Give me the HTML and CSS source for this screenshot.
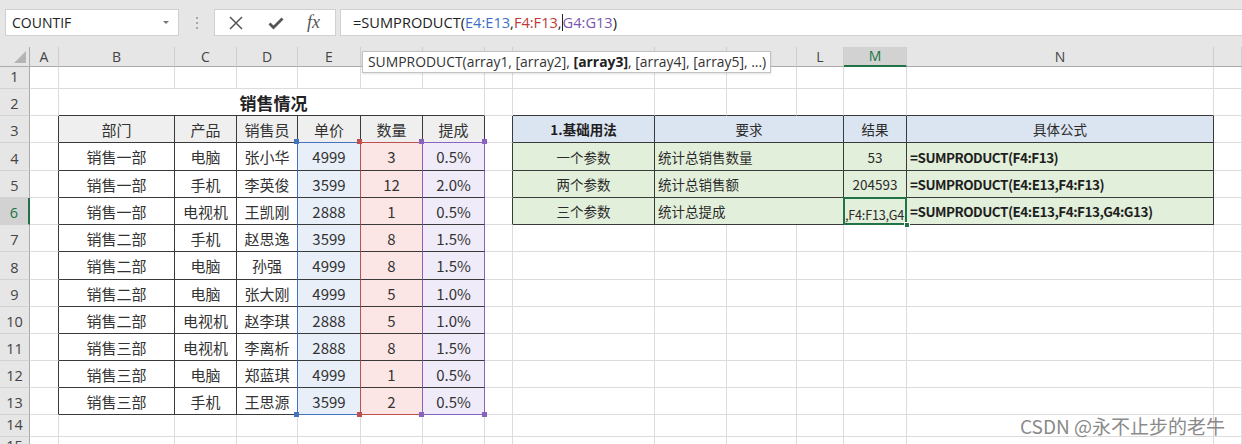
FILE: index.html
```html
<!DOCTYPE html>
<html lang="zh">
<head>
<meta charset="utf-8">
<title>SUMPRODUCT</title>
<link rel="stylesheet" href="styles.css">
</head>
<body>
<div class="app">
  <div class="fbar">
    <div class="namebox"><span>COUNTIF</span><span class="caret"></span></div>
    <div class="sep"><span></span><span></span><span></span></div>
    <div class="btns">
      <svg class="ico" width="16" height="16" viewBox="0 0 16 16"><path d="M2 2 L14 14 M14 2 L2 14" stroke="#555" stroke-width="1.5" fill="none"/></svg>
      <svg class="ico" width="18" height="16" viewBox="0 0 18 16"><path d="M2.5 8.5 L6.5 12.5 L15.5 3.5" stroke="#555" stroke-width="2.8" fill="none"/></svg>
      <span class="fx">fx</span>
    </div>
    <div class="finput">=SUMPRODUCT(<span class="cb">E4:E13</span>,<span class="cr">F4:F13</span>,<span class="cursor"></span><span class="cp">G4:G13</span>)</div>
  </div>

  <table class="grid">
    <colgroup>
      <col class="w30"><col class="w29"><col class="w116"><col class="w62"><col class="w61"><col class="w63"><col class="w62"><col class="w62"><col class="w28"><col class="w142"><col class="w72"><col class="w70"><col class="w47"><col class="w63"><col class="w307"><col class="w28">
    </colgroup>
    <tr class="hdr">
      <th class="corner"><span class="tri"></span></th><th>A</th><th>B</th><th>C</th><th>D</th><th>E</th><th></th><th></th><th></th><th></th><th></th><th></th><th>L</th><th class="selc">M</th><th>N</th><th></th>
    </tr>
    <tr class="h21">
      <th class="rh">1</th><td></td><td></td><td></td><td></td><td></td><td></td><td></td><td></td><td></td><td></td><td></td><td></td><td></td><td></td><td></td>
    </tr>
    <tr class="h27">
      <th class="rh">2</th><td></td><td colspan="6" class="title db">销售情况</td><td></td><td class="db"></td><td class="db"></td><td class="db"></td><td class="db"></td><td class="db"></td><td class="db"></td><td></td>
    </tr>
    <tr class="h27">
      <th class="rh">3</th><td class="dr"></td>
      <td class="lt hd dr db">部门</td><td class="lt hd dr db">产品</td><td class="lt hd dr db">销售员</td><td class="lt hd dr bbB">单价</td><td class="lt hd dr bbR">数量</td><td class="lt hd dr bbP">提成</td>
      <td class="dr"></td>
      <td class="rt rh1 dr db bold">1.基础用法</td><td colspan="3" class="rt rh1 dr db">要求</td><td class="rt rh1 dr db">结果</td><td class="rt rh1 dr db">具体公式</td><td></td>
    </tr>
    <tr class="h28">
      <th class="rh">4</th><td class="dr"></td>
      <td class="lt dr db">销售一部</td><td class="lt dr db">电脑</td><td class="lt rbB db">张小华</td><td class="lt ce rbR db"><i class="sq sqB tl"></i>4999</td><td class="lt cf rbP db"><i class="sq sqR tl"></i>3</td><td class="lt cg rbP db"><i class="sq sqP tl"></i><i class="sq sqP tr"></i>0.5%</td>
      <td class="dr"></td>
      <td class="rt rb dr db">一个参数</td><td colspan="3" class="rt rb dr db left">统计总销售数量</td><td class="rt rb dr db">53</td><td class="rt rb dr db left bold">=SUMPRODUCT(F4:F13)</td><td></td>
    </tr>
    <tr class="h27">
      <th class="rh">5</th><td class="dr"></td>
      <td class="lt dr db">销售一部</td><td class="lt dr db">手机</td><td class="lt rbB db">李英俊</td><td class="lt ce rbR db">3599</td><td class="lt cf rbP db">12</td><td class="lt cg rbP db">2.0%</td>
      <td class="dr"></td>
      <td class="rt rb dr db">两个参数</td><td colspan="3" class="rt rb dr db left">统计总销售额</td><td class="rt rb dr db">204593</td><td class="rt rb dr db left bold">=SUMPRODUCT(E4:E13,F4:F13)</td><td></td>
    </tr>
    <tr class="h27">
      <th class="rh selr">6</th><td class="dr"></td>
      <td class="lt dr db">销售一部</td><td class="lt dr db">电视机</td><td class="lt rbB db">王凯刚</td><td class="lt ce rbR db">2888</td><td class="lt cf rbP db">1</td><td class="lt cg rbP db">0.5%</td>
      <td class="dr"></td>
      <td class="rt rb dr db">三个参数</td><td colspan="3" class="rt rb dr db left">统计总提成</td><td class="rt rb dr db edit"><div class="edtxt">,F4:F13,G4</div><span class="selbox"></span><i class="handle"></i></td><td class="rt rb dr db left bold">=SUMPRODUCT(E4:E13,F4:F13,G4:G13)</td><td></td>
    </tr>
    <tr class="h27">
      <th class="rh">7</th><td class="dr"></td>
      <td class="lt dr db">销售二部</td><td class="lt dr db">手机</td><td class="lt rbB db">赵思逸</td><td class="lt ce rbR db">3599</td><td class="lt cf rbP db">8</td><td class="lt cg rbP db">1.5%</td>
      <td></td><td></td><td></td><td></td><td></td><td></td><td></td><td></td>
    </tr>
    <tr class="h28">
      <th class="rh">8</th><td class="dr"></td>
      <td class="lt dr db">销售二部</td><td class="lt dr db">电脑</td><td class="lt rbB db">孙强</td><td class="lt ce rbR db">4999</td><td class="lt cf rbP db">8</td><td class="lt cg rbP db">1.5%</td>
      <td></td><td></td><td></td><td></td><td></td><td></td><td></td><td></td>
    </tr>
    <tr class="h27">
      <th class="rh">9</th><td class="dr"></td>
      <td class="lt dr db">销售二部</td><td class="lt dr db">电脑</td><td class="lt rbB db">张大刚</td><td class="lt ce rbR db">4999</td><td class="lt cf rbP db">5</td><td class="lt cg rbP db">1.0%</td>
      <td></td><td></td><td></td><td></td><td></td><td></td><td></td><td></td>
    </tr>
    <tr class="h27">
      <th class="rh">10</th><td class="dr"></td>
      <td class="lt dr db">销售二部</td><td class="lt dr db">电视机</td><td class="lt rbB db">赵李琪</td><td class="lt ce rbR db">2888</td><td class="lt cf rbP db">5</td><td class="lt cg rbP db">1.0%</td>
      <td></td><td></td><td></td><td></td><td></td><td></td><td></td><td></td>
    </tr>
    <tr class="h27">
      <th class="rh">11</th><td class="dr"></td>
      <td class="lt dr db">销售三部</td><td class="lt dr db">电视机</td><td class="lt rbB db">李离析</td><td class="lt ce rbR db">2888</td><td class="lt cf rbP db">8</td><td class="lt cg rbP db">1.5%</td>
      <td></td><td></td><td></td><td></td><td></td><td></td><td></td><td></td>
    </tr>
    <tr class="h27">
      <th class="rh">12</th><td class="dr"></td>
      <td class="lt dr db">销售三部</td><td class="lt dr db">电脑</td><td class="lt rbB db">郑蓝琪</td><td class="lt ce rbR db">4999</td><td class="lt cf rbP db">1</td><td class="lt cg rbP db">0.5%</td>
      <td></td><td></td><td></td><td></td><td></td><td></td><td></td><td></td>
    </tr>
    <tr class="h27">
      <th class="rh">13</th><td class="dr"></td>
      <td class="lt dr db">销售三部</td><td class="lt dr db">手机</td><td class="lt rbB db">王思源</td><td class="lt ce rbR bbB"><i class="sq sqB bl"></i>3599</td><td class="lt cf rbP bbR"><i class="sq sqR bl"></i>2</td><td class="lt cg rbP bbP"><i class="sq sqP bl"></i><i class="sq sqP br"></i>0.5%</td>
      <td></td><td></td><td></td><td></td><td></td><td></td><td></td><td></td>
    </tr>
    <tr class="h20">
      <th class="rh">14</th><td></td><td></td><td></td><td></td><td></td><td></td><td></td><td></td><td></td><td></td><td></td><td></td><td></td><td></td><td></td>
    </tr>
    <tr class="h20">
      <th class="rh rh15">15</th><td></td><td></td><td></td><td></td><td></td><td></td><td></td><td></td><td></td><td></td><td></td><td></td><td></td><td></td><td></td>
    </tr>
  </table>

  <div class="tip">SUMPRODUCT(array1, [array2], <b>[array3]</b>, [array4], [array5], ...)</div>
  <div class="wm">CSDN @永不止步的老牛</div>
</div>
</body>
</html>
```

FILE: styles.css
```css
* { box-sizing: border-box; }
body {
  margin: 0;
  background: #fff;
  font-family: "Noto Sans CJK SC", "Noto Sans", sans-serif;
  color: #2b2b2b;
}
.app {
  position: relative;
  width: 1242px;
  height: 444px;
  overflow: hidden;
  background: #fff;
}

/* formula bar */
.fbar {
  height: 47px;
  background: #e6e6e6;
  display: flex;
  align-items: flex-start;
  padding-top: 9px;
}
.namebox {
  margin-left: 5px;
  width: 174px;
  height: 27px;
  background: #fff;
  border: 1px solid #d0d0d0;
  display: flex;
  align-items: center;
  justify-content: space-between;
  padding: 0 9px 0 6px;
  font-family: "Open Sans", "Noto Sans", sans-serif;
  font-size: 14px;
  color: #222;
}
.caret {
  width: 0; height: 0;
  border-left: 3px solid transparent;
  border-right: 3px solid transparent;
  border-top: 3px solid #777;
}
.sep {
  width: 35px;
  height: 27px;
  display: flex;
  flex-direction: column;
  align-items: center;
  justify-content: center;
  gap: 3px;
}
.sep span {
  width: 2px; height: 2px;
  background: #a8a8a8;
}
.btns {
  width: 122px;
  height: 27px;
  background: #fff;
  border: 1px solid #d0d0d0;
  display: flex;
  align-items: center;
  padding-left: 13px;
}
.btns .ico { display: block; }
.btns .ico:first-child { margin-right: 23px; }
.btns .ico:nth-child(2) { margin-right: 22px; }
.fx {
  font-family: "Liberation Serif", "DejaVu Serif", serif;
  font-style: italic;
  font-size: 18px;
  color: #555;
  line-height: 1;
  margin-top: -2px;
}
.finput {
  margin-left: 4px;
  flex: 1;
  height: 27px;
  background: #fff;
  border: 1px solid #d0d0d0;
  border-right: none;
  padding-left: 12px;
  font-family: "Open Sans", "Noto Sans", sans-serif;
  font-size: 14.6px;
  line-height: 25px;
  color: #222;
  white-space: nowrap;
}
.cb { color: #3d6fc6; }
.cr { color: #c0393a; }
.cp { color: #7a56b2; }
.cursor {
  display: inline-block;
  width: 1px;
  height: 17px;
  background: #222;
  vertical-align: -3px;
}

/* grid */
.grid {
  table-layout: fixed;
  border-collapse: separate;
  border-spacing: 0;
  width: 1242px;
}
.w30 { width: 30px; } .w29 { width: 29px; } .w116 { width: 116px; } .w62 { width: 62px; }
.w61 { width: 61px; } .w63 { width: 63px; } .w28 { width: 28px; } .w142 { width: 142px; }
.w72 { width: 72px; } .w70 { width: 70px; } .w47 { width: 47px; } .w307 { width: 307px; }

.grid td, .grid th {
  padding: 0;
  border-right: 1px solid #dcdcdc;
  border-bottom: 1px solid #dcdcdc;
  white-space: nowrap;
  overflow: hidden;
}
.hdr { height: 20px; }
.hdr th {
  background: #e6e6e6;
  font-family: "Open Sans", "Noto Sans", sans-serif;
  font-weight: normal;
  font-size: 14px;
  color: #444;
  border-right: 1px solid #cfcfcf;
  border-bottom: 1px solid #ababab;
  line-height: 18px;
  vertical-align: middle;
}
.hdr th.corner { position: relative; border-right: 1px solid #ababab; }
.tri {
  position: absolute;
  right: 3px;
  bottom: 3px;
  width: 0; height: 0;
  border-left: 12px solid transparent;
  border-bottom: 12px solid #b4b4b4;
}
.hdr th.selc {
  background: #d2d2d2;
  color: #217346;
  border-bottom: 2px solid #217346;
}
.h20 { height: 20px; }
.h21 { height: 21px; }
.h27 { height: 27px; }
.h28 { height: 28px; }

.grid th.rh {
  background: #e6e6e6;
  font-family: "Open Sans", "Noto Sans", sans-serif;
  font-weight: normal;
  font-size: 14.5px;
  color: #444;
  border-right: 1px solid #ababab;
  border-bottom: 1px solid #d2d2d2;
  vertical-align: bottom;
  line-height: 20px;
  padding-bottom: 1px;
}
.grid th.rh15 { vertical-align: top; line-height: 14px; padding: 2px 0 0; }
.grid th.selr {
  background: #d2d2d2;
  color: #217346;
  border-right: 2px solid #217346;
}

.title {
  text-align: center;
  font-size: 17px;
  font-weight: bold;
  color: #222;
  vertical-align: middle;
  padding-left: 4px !important;
}
.dr { border-right-color: #3a3a3a !important; }
.db { border-bottom-color: #3a3a3a !important; }
.bbB { border-bottom-color: #4672c0 !important; }
.bbR { border-bottom-color: #c0504d !important; }
.bbP { border-bottom-color: #8a63c0 !important; }
.rbB { border-right-color: #4672c0 !important; }
.rbR { border-right-color: #c0504d !important; }
.rbP { border-right-color: #8a63c0 !important; }

.lt {
  position: relative;
  text-align: center;
  vertical-align: middle;
  font-size: 15px;
  color: #333;
  overflow: visible !important;
}
.hd { background: #efefef; }
.ce { background: #e9eff9; }
.cf { background: #fbe5e5; }
.cg { background: #f0ebf8; }

.sq {
  position: absolute;
  width: 5px;
  height: 5px;
  z-index: 2;
}
.sqB { background: #4672c0; }
.sqR { background: #c0504d; }
.sqP { background: #8a63c0; }
.tl { left: -4px; top: -4px; }
.tr { right: -3px; top: -4px; }
.bl { left: -4px; bottom: -3px; }
.br { right: -3px; bottom: -3px; }

.rt {
  text-align: center;
  vertical-align: middle;
  font-size: 13.5px;
  color: #2b2b2b;
}
.rh1 { background: #dbe5f1; }
.rb { background: #e2efda; }
.left { text-align: left; padding-left: 3px !important; }
.bold { font-weight: bold; color: #1e1e1e; }
.rb.bold { letter-spacing: -0.5px; }

.edit {
  position: relative;
  overflow: visible !important;
  vertical-align: bottom !important;
}
.edtxt {
  overflow: hidden;
  white-space: nowrap;
  text-align: left;
  font-size: 12.6px;
  letter-spacing: -0.2px;
  line-height: 18px;
  color: #2b2b2b;
  margin-left: 1px;
}
.selbox {
  position: absolute;
  left: -1px; top: -1px; right: -1px; bottom: -1px;
  border: 2px solid #217346;
  z-index: 3;
}
.handle {
  position: absolute;
  right: -4px;
  bottom: -4px;
  width: 6px;
  height: 6px;
  background: #217346;
  border: 1px solid #fff;
  z-index: 4;
}

/* tooltip */
.tip {
  position: absolute;
  left: 362px;
  top: 51px;
  width: 409px;
  height: 22px;
  background: #fff;
  border: 1px solid #c3c3c3;
  box-shadow: 0 1px 2px rgba(0,0,0,0.12);
  font-family: "Open Sans", "Noto Sans", sans-serif;
  font-size: 13.9px;
  line-height: 20px;
  padding-left: 5px;
  color: #333;
  white-space: nowrap;
  z-index: 5;
}
.tip b { font-weight: bold; color: #222; }

.wm {
  position: absolute;
  right: 17px;
  bottom: 6px;
  font-size: 19px;
  line-height: 24px;
  color: #8a8a8a;
  z-index: 5;
  font-family: "Noto Sans CJK SC", "Noto Sans", sans-serif;
}
```
